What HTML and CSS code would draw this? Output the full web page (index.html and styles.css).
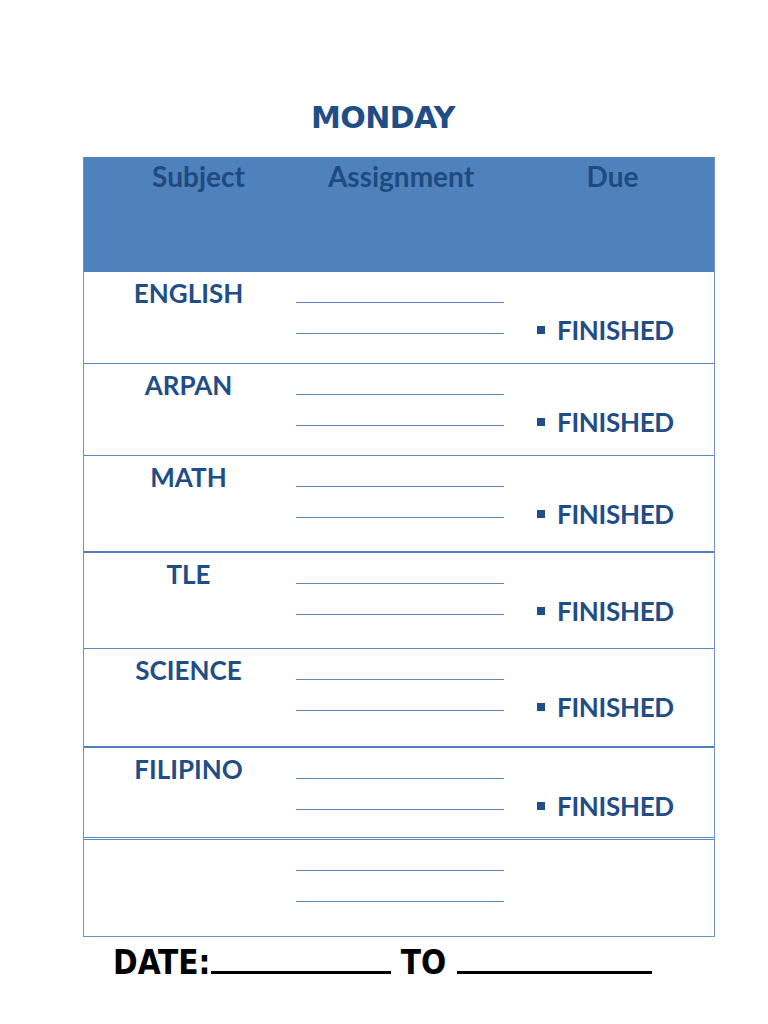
FILE: index.html
```html
<!DOCTYPE html>
<html lang="en">
<head>
<meta charset="utf-8">
<title>Monday</title>
<link rel="stylesheet" href="styles.css">
</head>
<body>
<main class="page">
  <h1 class="title">MONDAY</h1>
  <section class="schedule">
    <div class="head">
      <span class="h-subject">Subject</span>
      <span class="h-assign">Assignment</span>
      <span class="h-due">Due</span>
    </div>
    <div class="row r1">
      <div class="subject">ENGLISH</div>
      <div class="lines"><span class="line"></span><span class="line"></span></div>
      <div class="due"><span class="bullet"></span>FINISHED</div>
    </div>
    <div class="row r2">
      <div class="subject">ARPAN</div>
      <div class="lines"><span class="line"></span><span class="line"></span></div>
      <div class="due"><span class="bullet"></span>FINISHED</div>
    </div>
    <div class="row r3">
      <div class="subject">MATH</div>
      <div class="lines"><span class="line"></span><span class="line"></span></div>
      <div class="due"><span class="bullet"></span>FINISHED</div>
    </div>
    <div class="row r4">
      <div class="subject">TLE</div>
      <div class="lines"><span class="line"></span><span class="line"></span></div>
      <div class="due"><span class="bullet"></span>FINISHED</div>
    </div>
    <div class="row r5">
      <div class="subject">SCIENCE</div>
      <div class="lines"><span class="line"></span><span class="line"></span></div>
      <div class="due"><span class="bullet"></span>FINISHED</div>
    </div>
    <div class="row r6">
      <div class="subject">FILIPINO</div>
      <div class="lines"><span class="line"></span><span class="line"></span></div>
      <div class="due"><span class="bullet"></span>FINISHED</div>
    </div>
    <div class="row r7">
      <div class="subject"></div>
      <div class="lines"><span class="line"></span><span class="line"></span></div>
      <div class="due"></div>
    </div>
  </section>
  <p class="date">DATE:<span class="blank b1"></span> TO <span class="blank b2"></span></p>
</main>
</body>
</html>
```

FILE: styles.css
```css
* { box-sizing: border-box; }
html, body { margin: 0; padding: 0; background: #ffffff; }
body { width: 768px; height: 1024px; overflow: hidden; }

.page {
  padding: 100px 53px 0 83px;
  font-family: Lato, "Open Sans", sans-serif;
}

.title {
  margin: 0 0 21px 0;
  font-family: "DejaVu Sans", Verdana, sans-serif;
  font-weight: bold;
  font-size: 30px;
  line-height: 36px;
  letter-spacing: -0.6px;
  color: #1f4e87;
  text-align: center;
  width: 600px;
}

.schedule {
  width: 632px;
  border-left: 1px solid #6f93c4;
  border-right: 1px solid #6f93c4;
  border-bottom: 1px solid #6f93c4;
}

.head {
  display: grid;
  grid-template-columns: 207px 220px 1fr;
  height: 115px;
  background: #4f81bd;
  padding-top: 3px;
  font-weight: bold;
  font-size: 28px;
  line-height: 32px;
  color: #1f4a80;
}
.h-subject { padding-left: 22px; text-align: center; }
.h-assign { text-align: center; }
.h-due { text-align: center; }

.row {
  display: grid;
  grid-template-columns: 207px 220px 1fr;
  border-bottom: 1px solid #5b87c0;
  font-weight: bold;
  font-size: 26px;
  line-height: 32px;
  color: #1f4e87;
}
.r1 { height: 92px; }
.r2 { height: 92px; }
.r3 { height: 97px; border-bottom: 2px solid #4f7fba; }
.r4 { height: 96px; }
.r5 { height: 99px; border-bottom: 2px solid #4f7fba; }
.r6 { height: 92px; border-bottom: 3px double #5b87c0; }
.r7 { height: 96px; border-bottom: none; }

.subject {
  padding-top: 5px;
  text-align: center;
  padding-left: 2px;
}

.lines {
  display: flex;
  flex-direction: column;
  gap: 30px;
  padding-top: 30px;
  padding-left: 5px;
}
.line {
  display: block;
  width: 208px;
  height: 1px;
  background: #5b87c0;
}

.due {
  display: flex;
  align-items: center;
  gap: 12px;
  padding-top: 42px;
  padding-left: 26px;
  align-self: start;
  letter-spacing: -0.3px;
}
.bullet {
  display: inline-block;
  width: 8px;
  height: 8px;
  background: #1f4e87;
}

.date {
  margin: 6px 0 0 30px;
  font-family: "DejaVu Sans Condensed", "DejaVu Sans", sans-serif;
  font-stretch: condensed;
  font-weight: bold;
  font-size: 33px;
  line-height: 40px;
  color: #000000;
  white-space: nowrap;
}
.blank {
  display: inline-block;
  height: 3px;
  border-bottom: 3px solid #000;
  vertical-align: baseline;
}
.b1 { width: 180px; }
.b2 { width: 195px; }
```
